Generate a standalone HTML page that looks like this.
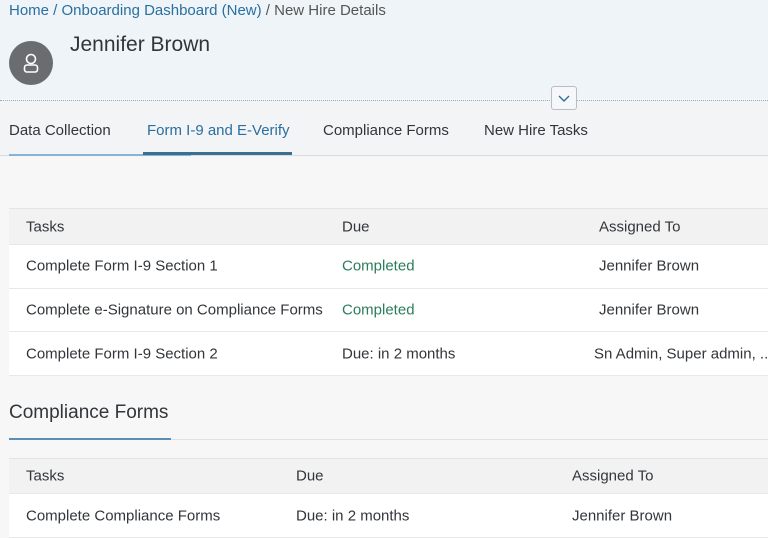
<html><head><style>
body{margin:0;width:768px;height:522px;overflow:hidden;background:#f7f7f7;font-family:"Liberation Sans",sans-serif;color:#32363a;position:relative}
.a{position:absolute}
.hdr{left:0;top:0;width:768px;height:99px;background:#eef4f7}
.tabs{left:0;top:100px;width:768px;height:56px;background:#f3f4f5;border-top:1px dotted #9aa}
.t{font-size:15px;top:122px}
.tbl{left:9px;width:759px;background:#fff}
.th{background:#f2f2f2;border-top:1px solid #e4e4e4;border-bottom:1px solid #e4e4e4}
.row{height:42.7px;border-bottom:1px solid #e8e8e8;position:relative}
.c{position:absolute;font-size:15px;top:50%;transform:translateY(-50%);white-space:nowrap}
.g{color:#2b7d5b}
</style></head><body>
<div class="a hdr"></div>
<div class="a" style="left:9px;top:2px;font-size:15px;color:#555"><span style="color:#2a6fa0">Home / Onboarding Dashboard (New)</span> / New Hire Details</div>
<div class="a" style="left:9px;top:41px;width:44px;height:44px;border-radius:50%;background:#6a6d70"><svg width="44" height="44"><circle cx="22" cy="18" r="4.5" fill="none" stroke="#fff" stroke-width="1.6"/><rect x="15.5" y="24" width="13" height="7" rx="2.5" fill="none" stroke="#fff" stroke-width="1.6"/></svg></div>
<div class="a" style="left:70px;top:33px;font-size:21px;color:#32363a">Jennifer Brown</div>
<div class="a tabs"></div>
<div class="a" style="left:551px;top:86px;width:24px;height:22px;background:#f5f7f8;border:1px solid #bbc;border-radius:3px"><svg width="24" height="22"><path d="M7 9l5 5 5-5" fill="none" stroke="#2a6fa0" stroke-width="1.4"/></svg></div>
<div class="a t" style="left:9px">Data Collection</div>
<div class="a t" style="left:147px;color:#2a6fa0">Form I-9 and E-Verify</div>
<div class="a t" style="left:323px">Compliance Forms</div>
<div class="a t" style="left:484px">New Hire Tasks</div>
<div class="a" style="left:0;top:155px;width:768px;height:1px;background:#ddd"></div>
<div class="a" style="left:9px;top:154px;width:182px;height:2px;background:#8ab4d4"></div>
<div class="a" style="left:143px;top:152px;width:149px;height:3px;background:#3a6f90"></div>
<div class="a tbl" style="top:208px">
<div class="th row" style="height:35px"><span class="c" style="left:17px">Tasks</span><span class="c" style="left:333px">Due</span><span class="c" style="left:590px">Assigned To</span></div>
<div class="row"><span class="c" style="left:17px">Complete Form I-9 Section 1</span><span class="c g" style="left:333px">Completed</span><span class="c" style="left:590px">Jennifer Brown</span></div>
<div class="row"><span class="c" style="left:17px">Complete e-Signature on Compliance Forms</span><span class="c g" style="left:333px">Completed</span><span class="c" style="left:590px">Jennifer Brown</span></div>
<div class="row"><span class="c" style="left:17px">Complete Form I-9 Section 2</span><span class="c" style="left:333px">Due: in 2 months</span><span class="c" style="left:585px">Sn Admin, Super admin, ...</span></div>
</div>
<div class="a" style="left:9px;top:402px;font-size:19px">Compliance Forms</div>
<div class="a" style="left:9px;top:439px;width:759px;height:1px;background:#e0e0e0"></div>
<div class="a" style="left:9px;top:438px;width:162px;height:2px;background:#5b8fb5"></div>
<div class="a tbl" style="top:458px">
<div class="th row" style="height:34px"><span class="c" style="left:17px">Tasks</span><span class="c" style="left:287px">Due</span><span class="c" style="left:563px">Assigned To</span></div>
<div class="row"><span class="c" style="left:17px;top:22px">Complete Compliance Forms</span><span class="c" style="left:287px;top:22px">Due: in 2 months</span><span class="c" style="left:563px;top:22px">Jennifer Brown</span></div>
</div>
</body></html>
